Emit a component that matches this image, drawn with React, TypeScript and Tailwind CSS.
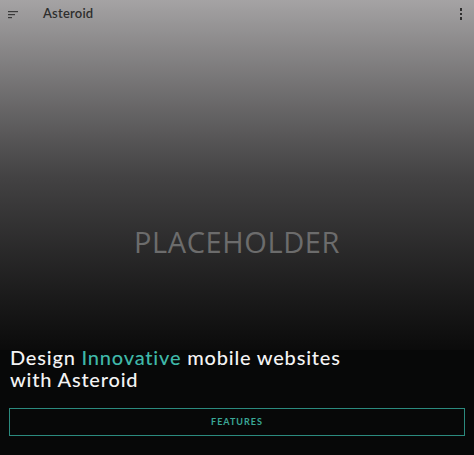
export default function App() {
  return (
    <div className="relative w-[474px] h-[455px] overflow-hidden bg-[#070808] font-['Lato',_'Liberation_Sans',_sans-serif]">
      <div className="h-[350px] bg-gradient-to-b from-[#a5a3a4] via-[#444344] to-[#0b0b0b]">
        <header className="flex items-center h-[28px] pl-[8px] pr-[12px]">
          <svg width="11" height="9" viewBox="0 0 11 9" className="text-[#3a3a3a]">
            <rect x="0" y="1" width="10" height="1.2" fill="currentColor" />
            <rect x="0" y="4" width="7" height="1.2" fill="currentColor" />
            <rect x="0" y="7" width="4" height="1.2" fill="currentColor" />
          </svg>
          <span className="ml-[24px] text-[13px] font-semibold text-[#2e2e2e] tracking-[0.2px]">Asteroid</span>
          <div className="ml-auto flex flex-col gap-[2px] items-center">
            <span className="w-[2.5px] h-[2.5px] bg-[#2e2e2e]" />
            <span className="w-[2.5px] h-[2.5px] bg-[#2e2e2e]" />
            <span className="w-[2.5px] h-[2.5px] bg-[#2e2e2e]" />
          </div>
        </header>
        <div className="flex justify-center pt-[192px]">
          <span className="text-[29px] text-[#6c6c6c] font-['Open_Sans',_sans-serif] tracking-[0.6px]">PLACEHOLDER</span>
        </div>
      </div>
      <div className="absolute left-0 right-0 top-[346px] px-[10px]">
        <h1 className="text-[20px] leading-[22px] text-[#f4f4f4] font-medium tracking-[0.8px]">
          Design <span className="text-[#3fb8a8]">Innovative</span> mobile websites
          <br />
          with Asteroid
        </h1>
        <button className="mt-[18px] -ml-[1px] w-[456px] h-[28px] border border-[#2b8a7e] text-[#3aa897] text-[9px] font-bold tracking-[1px]">
          FEATURES
        </button>
      </div>
    </div>
  );
}
